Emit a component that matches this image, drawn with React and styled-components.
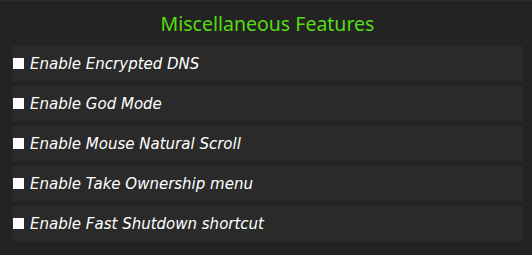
import React from "react";
import styled, { createGlobalStyle } from "styled-components";

const features = [
  "Enable Encrypted DNS",
  "Enable God Mode",
  "Enable Mouse Natural Scroll",
  "Enable Take Ownership menu",
  "Enable Fast Shutdown shortcut",
];

const GlobalStyle = createGlobalStyle`
  html, body {
    margin: 0;
    padding: 0;
    background: #212121;
  }
  * {
    box-sizing: border-box;
  }
`;

const Panel = styled.div`
  width: 532px;
  height: 255px;
  background: #232323;
  border-top: 1px solid #2b2b2b;
  padding: 0 9px 0 12px;
  font-family: "Noto Sans", "DejaVu Sans", sans-serif;
`;

const Title = styled.h2`
  margin: 0;
  height: 45px;
  display: flex;
  align-items: center;
  justify-content: center;
  font-size: 19.5px;
  font-weight: 400;
  color: #55dc12;
`;

const List = styled.div`
  display: flex;
  flex-direction: column;
  gap: 5px;
`;

const Row = styled.label`
  height: 35px;
  display: flex;
  align-items: center;
  gap: 6px;
  padding-left: 1px;
  background: #2a2a2a;
`;

const Box = styled.span`
  width: 11px;
  height: 11px;
  background: #ffffff;
  flex-shrink: 0;
`;

const Label = styled.span`
  font-family: "DejaVu Sans", sans-serif;
  font-size: 15px;
  font-style: italic;
  color: #ffffff;
`;

function App() {
  return (
    <>
      <GlobalStyle />
      <Panel>
        <Title>Miscellaneous Features</Title>
        <List>
          {features.map((f) => (
            <Row key={f}>
              <Box />
              <Label>{f}</Label>
            </Row>
          ))}
        </List>
      </Panel>
    </>
  );
}

export default App;
